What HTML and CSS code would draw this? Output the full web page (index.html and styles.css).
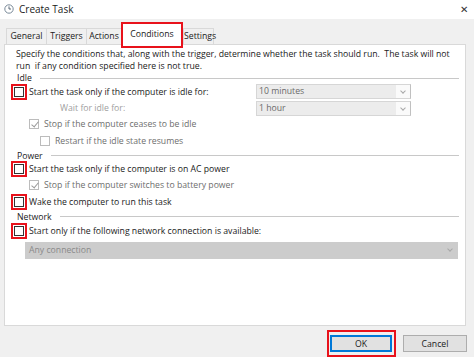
FILE: index.html
```html
<!DOCTYPE html>
<html lang="en">
<head>
    <meta charset="UTF-8">
    <meta name="viewport" content="width=device-width, initial-scale=1.0">
    <title>Create Task</title>
    <link rel="stylesheet" href="styles.css">
</head>
<body>
    <div class="window">
        <div class="titlebar">
            <svg class="app-icon" width="10" height="10" viewBox="0 0 10 10">
                <circle cx="5" cy="5" r="4.2" fill="#fff" stroke="#7a8a99" stroke-width="1"/>
                <path d="M5 2.4 V5 H7" fill="none" stroke="#4a5a6a" stroke-width="0.9"/>
            </svg>
            <span class="title">Create Task</span>
            <span class="close">&#x2715;</span>
        </div>

        <div class="tabs">
            <div class="tab tab-general">General</div>
            <div class="tab tab-triggers">Triggers</div>
            <div class="tab tab-actions">Actions</div>
            <div class="tab active">Conditions</div>
            <div class="tab tab-settings">Settings</div>
        </div>

        <div class="panel">
            <p class="intro">Specify the conditions that, along with the trigger, determine whether the task should run.&nbsp; The task will not<br>run&nbsp; if any condition specified here is not true.</p>

            <div class="group-title row-h11"><span>Idle</span><hr></div>
            <div class="row row-h16">
                <span class="check marked"><span class="box"></span></span>
                <span class="label">Start the task only if the computer is idle for:</span>
                <div class="select">10 minutes<span class="arrow"></span></div>
            </div>
            <div class="row row-h17">
                <span class="label muted wait">Wait for idle for:</span>
                <div class="select">1 hour<span class="arrow"></span></div>
            </div>
            <div class="row row-h14 indent1">
                <span class="check"><span class="box checked"></span></span>
                <span class="label dim">Stop if the computer ceases to be idle</span>
            </div>
            <div class="row row-h20 indent2">
                <span class="check"><span class="box disabled"></span></span>
                <span class="label dim">Restart if the idle state resumes</span>
            </div>

            <div class="group-title row-h10"><span>Power</span><hr></div>
            <div class="row row-h16">
                <span class="check marked"><span class="box"></span></span>
                <span class="label">Start the task only if the computer is on AC power</span>
            </div>
            <div class="row row-h16 indent1">
                <span class="check"><span class="box checked"></span></span>
                <span class="label dim">Stop if the computer switches to battery power</span>
            </div>
            <div class="row row-h18">
                <span class="check marked"><span class="box"></span></span>
                <span class="label">Wake the computer to run this task</span>
            </div>

            <div class="group-title row-h12"><span>Network</span><hr></div>
            <div class="row row-h16">
                <span class="check marked"><span class="box"></span></span>
                <span class="label">Start only if the following network connection is available:</span>
            </div>
            <div class="select wide">Any connection<span class="arrow"></span></div>
        </div>

        <div class="footer">
            <div class="ok-mark"><button class="btn default">OK</button></div>
            <button class="btn">Cancel</button>
        </div>
    </div>
</body>
</html>
```

FILE: styles.css
```css
* {
    box-sizing: border-box;
}
body {
    margin: 0;
    font-family: 'Open Sans', 'Noto Sans', sans-serif;
    font-size: 8.7px;
    color: #1a1a1a;
}
.window {
    width: 474px;
    height: 357px;
    background: #f0f0f0;
    display: flex;
    flex-direction: column;
    overflow: hidden;
}
.titlebar {
    height: 19px;
    background: #fff;
    display: flex;
    align-items: center;
    padding: 0 6px 0 4px;
}
.app-icon {
    margin-right: 5px;
}
.title {
    font-size: 10px;
    flex: 1;
}
.close {
    font-size: 10px;
    color: #333;
}
.tabs {
    display: flex;
    align-items: flex-end;
    height: 25px;
    padding-left: 6px;
}
.tab {
    height: 16px;
    line-height: 15px;
    text-align: center;
    border: 1px solid #d9d9d9;
    border-bottom: none;
    border-right: none;
    background: #f0f0f0;
    white-space: nowrap;
}
.tab-general { width: 40px; }
.tab-triggers { width: 40px; }
.tab-actions { width: 35px; }
.tab-settings { width: 31px; border-right: 1px solid #d9d9d9; text-align: right; padding-right: 1px; }
.tab.active {
    width: 62px;
    height: 26px;
    line-height: 20px;
    background: #fff;
    border: 2px solid #e8121b;
    margin-bottom: -4px;
    position: relative;
    z-index: 1;
}
.panel {
    margin: 0 8px 0 4px;
    height: 283px;
    background: #fff;
    border: 1px solid #d9d9d9;
    padding: 3px 6px 0 11px;
    display: flex;
    flex-direction: column;
}
.intro {
    margin: 0;
    line-height: 12.5px;
    height: 25px;
}
.group-title {
    display: flex;
    align-items: center;
    margin-left: 1px;
}
.group-title hr {
    flex: 1;
    margin: 0 0 0 8px;
    border: none;
    border-top: 1px solid #c8c8c8;
}
.row {
    display: flex;
    align-items: center;
}
.row-h10 { height: 10px; }
.row-h11 { height: 11px; }
.row-h12 { height: 12px; }
.row-h14 { height: 14px; }
.row-h16 { height: 16px; }
.row-h17 { height: 17px; }
.row-h18 { height: 18px; }
.row-h20 { height: 20px; }
.indent1 { padding-left: 15px; }
.indent2 { padding-left: 26px; }
.check {
    width: 16px;
    height: 16px;
    display: flex;
    align-items: center;
    justify-content: center;
    margin-left: -5px;
    margin-right: 2px;
    flex-shrink: 0;
}
.check.marked {
    border: 2px solid #e8121b;
}
.box {
    width: 10px;
    height: 10px;
    border: 1px solid #333;
    background: #fff;
}
.box.disabled {
    border-color: #bcbcbc;
}
.box.checked {
    border-color: #bcbcbc;
    position: relative;
}
.box.checked::after {
    content: '';
    position: absolute;
    left: 2.5px;
    top: 0;
    width: 3px;
    height: 6px;
    border: solid #9a9a9a;
    border-width: 0 1px 1px 0;
    transform: rotate(40deg);
}
.label {
    white-space: nowrap;
}
.dim {
    color: #6d6d6d;
}
.muted {
    color: #a0a0a0;
}
.wait {
    margin-left: 44px;
}
.select {
    margin-left: auto;
    margin-right: 48px;
    width: 155px;
    height: 15px;
    border: 1px solid #d6d6d6;
    border-right-color: #c0c0c0;
    background: #ececec;
    color: #6a6a6a;
    padding-left: 2px;
    line-height: 13px;
    position: relative;
}
.arrow {
    position: absolute;
    right: 0;
    top: 0;
    width: 14px;
    height: 13px;
    background: #fafafa;
}
.arrow::after {
    content: '';
    position: absolute;
    left: 5px;
    top: 4px;
    width: 3px;
    height: 3px;
    border: solid #a8a8a8;
    border-width: 0 1px 1px 0;
    transform: rotate(45deg);
}
.select.wide {
    margin: 3px 0 0 9px;
    width: 433px;
    height: 17px;
    line-height: 15px;
    background: #cccccc;
    border-color: #cccccc;
    color: #8a8a8a;
    padding-left: 3px;
}
.select.wide .arrow {
    background: transparent;
}
.footer {
    flex: 1;
    display: flex;
    justify-content: flex-end;
    align-items: flex-start;
    padding: 4px 7px 0 0;
    gap: 7px;
}
.ok-mark {
    border: 2px solid #e8121b;
    padding: 3px 2px 3px 1px;
}
.btn {
    width: 64px;
    height: 17px;
    margin-top: 5px;
    font-family: 'Open Sans', 'Noto Sans', sans-serif;
    font-size: 8.7px;
    color: #1a1a1a;
    background: #e1e1e1;
    border: 1px solid #adadad;
    padding: 0;
}
.btn.default {
    width: 62px;
    margin-top: 0;
    border: 1px solid #0078d7;
    box-shadow: inset 0 0 0 1px #0078d7;
}
```
